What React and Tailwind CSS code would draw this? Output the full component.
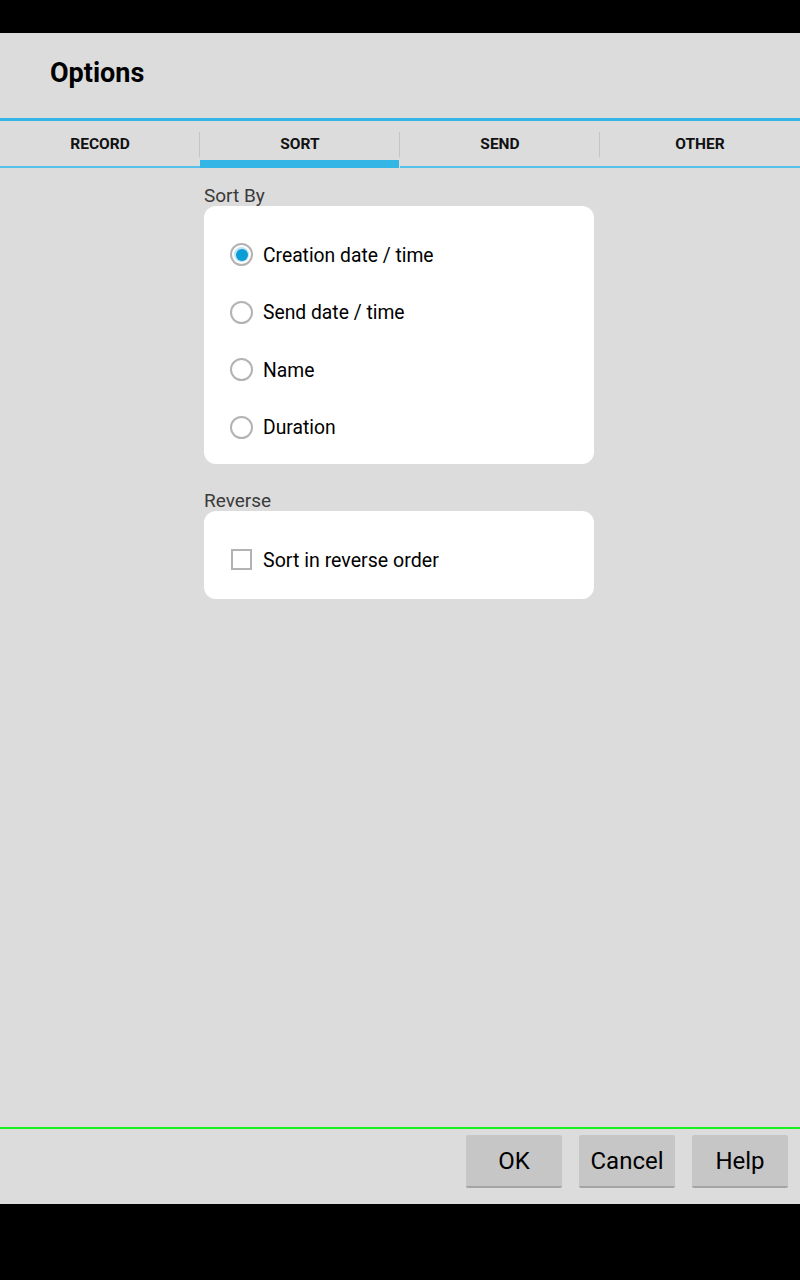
import { useState } from 'react'

const TABS = ['RECORD', 'SORT', 'SEND', 'OTHER']
const SORT_OPTIONS = ['Creation date / time', 'Send date / time', 'Name', 'Duration']

function Radio({ checked }) {
  return (
    <span className="w-[23px] h-[23px] rounded-full border-2 border-[#b3b3b3] bg-white flex items-center justify-center shrink-0">
      {checked && (
        <span className="w-[15px] h-[15px] rounded-full bg-[#bfe3f1] flex items-center justify-center">
          <span className="w-[12px] h-[12px] rounded-full bg-[#0a9ed4]" />
        </span>
      )}
    </span>
  )
}

export default function App() {
  const [tab, setTab] = useState(1)
  const [sortBy, setSortBy] = useState(0)
  const [reverse, setReverse] = useState(false)

  return (
    <div className="w-[800px] h-[1280px] flex flex-col bg-[#dcdcdc] font-['Roboto',sans-serif]">
      <div className="h-[33px] bg-black shrink-0" />

      {/* Title */}
      <div className="h-[85px] flex items-center pl-[50px] pb-[4px] shrink-0">
        <h1 className="text-[27px] font-bold text-black">Options</h1>
      </div>
      <div className="h-[3px] bg-[#33b5e5] shrink-0" />

      {/* Tabs */}
      <div className="h-[47px] flex shrink-0">
        {TABS.map((t, i) => (
          <button
            key={t}
            onClick={() => setTab(i)}
            className="flex-1 flex flex-col relative"
          >
            <span className="flex-1 flex items-center justify-center pt-[9px] text-[15.5px] font-bold text-[#111]">{t}</span>
            {i === tab ? (
              <span className="h-[8px] bg-[#33b5e5] mr-[1px]" />
            ) : (
              <span className="h-[2px] mt-[6px] bg-[#56c2ea]" />
            )}
            {i > 0 && <span className="absolute left-[-1px] top-[11px] h-[25px] w-[1px] bg-[#c4c4c4]" />}
          </button>
        ))}
      </div>

      {/* Content */}
      <div className="flex-1 flex flex-col pl-[204px] pt-[16px]">
        <p className="h-[22px] leading-[24px] text-[19px] text-[#3a3a3a]">Sort By</p>
        <div className="w-[390px] bg-white rounded-[12px] pt-[20px] pb-[8px] flex flex-col">
          {SORT_OPTIONS.map((o, i) => (
            <button
              key={o}
              onClick={() => setSortBy(i)}
              className="h-[57.5px] flex items-center gap-[10px] pl-[26px] text-left"
            >
              <Radio checked={sortBy === i} />
              <span className="pt-[3px] text-[19.3px] text-black">{o}</span>
            </button>
          ))}
        </div>

        <p className="mt-[25px] h-[22px] leading-[24px] text-[19px] text-[#3a3a3a]">Reverse</p>
        <div className="w-[390px] bg-white rounded-[12px] pt-[20px] pb-[11px]">
          <button
            onClick={() => setReverse(!reverse)}
            className="h-[57px] flex items-center gap-[11px] pl-[27px] text-left"
          >
            <span className="w-[21px] h-[21px] border-2 border-[#b3b3b3] bg-white flex items-center justify-center text-[#0a9ed4] text-[16px]">
              {reverse ? '✓' : ''}
            </span>
            <span className="pt-[2px] text-[19.6px] text-black">Sort in reverse order</span>
          </button>
        </div>
      </div>

      {/* Footer */}
      <div className="h-[2px] bg-[#19f219] shrink-0" />
      <div className="h-[75px] flex justify-end items-start pt-[6px] pr-[12px] gap-[17px] shrink-0">
        {['OK', 'Cancel', 'Help'].map(b => (
          <button
            key={b}
            className="w-[96px] h-[53px] bg-[#c6c6c6] border-b-[2px] border-[#a4a4a4] rounded-[2px] text-[24px] text-black"
          >
            {b}
          </button>
        ))}
      </div>
      <div className="h-[76px] bg-black shrink-0" />
    </div>
  )
}
